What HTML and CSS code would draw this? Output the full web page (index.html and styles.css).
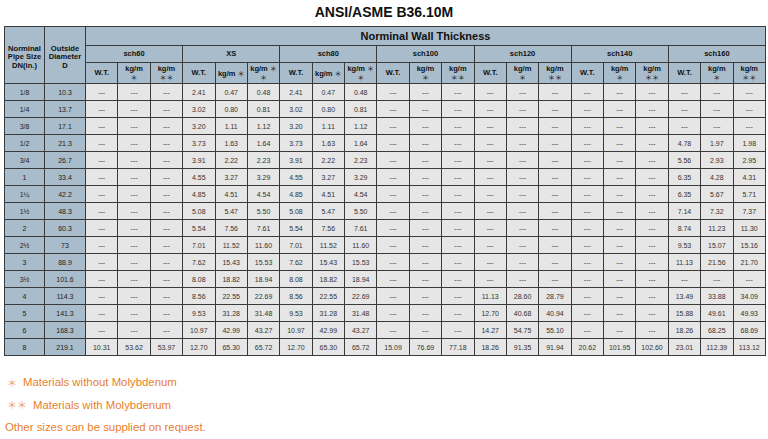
FILE: index.html
```html
<!DOCTYPE html>
<html>
<head>
<meta charset="utf-8">
<link rel="stylesheet" href="styles.css">
</head>
<body>
<h1 class="title">ANSI/ASME B36.10M</h1>
<table class="spec">
<colgroup>
<col class="c-dn"><col class="c-od">
<col><col><col><col><col><col><col><col><col><col><col><col><col><col><col><col><col><col><col><col><col>
</colgroup>
<thead>
<tr class="h1">
<th rowspan="3" class="side">Norminal<br>Pipe Size<br>DN(in.)</th>
<th rowspan="3" class="side">Outside<br>Diameter<br>D</th>
<th colspan="21" class="big">Norminal Wall Thickness</th>
</tr>
<tr class="h2">
<th colspan="3">sch60</th><th colspan="3">XS</th><th colspan="3">sch80</th><th colspan="3">sch100</th><th colspan="3">sch120</th><th colspan="3">sch140</th><th colspan="3">sch160</th>
</tr>
<tr class="h3">
<th>W.T.</th><th>kg/m<br><span class="st">＊</span></th><th>kg/m<br><span class="st">＊＊</span></th>
<th>W.T.</th><th>kg/m <span class="st">＊</span></th><th>kg/m <span class="st">＊</span><br><span class="st">＊</span></th>
<th>W.T.</th><th>kg/m <span class="st">＊</span></th><th>kg/m <span class="st">＊</span><br><span class="st">＊</span></th>
<th>W.T.</th><th>kg/m<br><span class="st">＊</span></th><th>kg/m<br><span class="st">＊＊</span></th>
<th>W.T.</th><th>kg/m<br><span class="st">＊</span></th><th>kg/m<br><span class="st">＊＊</span></th>
<th>W.T.</th><th>kg/m<br><span class="st">＊</span></th><th>kg/m<br><span class="st">＊＊</span></th>
<th>W.T.</th><th>kg/m<br><span class="st">＊</span></th><th>kg/m<br><span class="st">＊＊</span></th>
</tr>
</thead>
<tbody>
<tr><th>1/8</th><th>10.3</th><td>---</td><td>---</td><td>---</td><td>2.41</td><td>0.47</td><td>0.48</td><td>2.41</td><td>0.47</td><td>0.48</td><td>---</td><td>---</td><td>---</td><td>---</td><td>---</td><td>---</td><td>---</td><td>---</td><td>---</td><td>---</td><td>---</td><td>---</td></tr>
<tr><th>1/4</th><th>13.7</th><td>---</td><td>---</td><td>---</td><td>3.02</td><td>0.80</td><td>0.81</td><td>3.02</td><td>0.80</td><td>0.81</td><td>---</td><td>---</td><td>---</td><td>---</td><td>---</td><td>---</td><td>---</td><td>---</td><td>---</td><td>---</td><td>---</td><td>---</td></tr>
<tr><th>3/8</th><th>17.1</th><td>---</td><td>---</td><td>---</td><td>3.20</td><td>1.11</td><td>1.12</td><td>3.20</td><td>1.11</td><td>1.12</td><td>---</td><td>---</td><td>---</td><td>---</td><td>---</td><td>---</td><td>---</td><td>---</td><td>---</td><td>---</td><td>---</td><td>---</td></tr>
<tr><th>1/2</th><th>21.3</th><td>---</td><td>---</td><td>---</td><td>3.73</td><td>1.63</td><td>1.64</td><td>3.73</td><td>1.63</td><td>1.64</td><td>---</td><td>---</td><td>---</td><td>---</td><td>---</td><td>---</td><td>---</td><td>---</td><td>---</td><td>4.78</td><td>1.97</td><td>1.98</td></tr>
<tr><th>3/4</th><th>26.7</th><td>---</td><td>---</td><td>---</td><td>3.91</td><td>2.22</td><td>2.23</td><td>3.91</td><td>2.22</td><td>2.23</td><td>---</td><td>---</td><td>---</td><td>---</td><td>---</td><td>---</td><td>---</td><td>---</td><td>---</td><td>5.56</td><td>2.93</td><td>2.95</td></tr>
<tr><th>1</th><th>33.4</th><td>---</td><td>---</td><td>---</td><td>4.55</td><td>3.27</td><td>3.29</td><td>4.55</td><td>3.27</td><td>3.29</td><td>---</td><td>---</td><td>---</td><td>---</td><td>---</td><td>---</td><td>---</td><td>---</td><td>---</td><td>6.35</td><td>4.28</td><td>4.31</td></tr>
<tr><th>1¼</th><th>42.2</th><td>---</td><td>---</td><td>---</td><td>4.85</td><td>4.51</td><td>4.54</td><td>4.85</td><td>4.51</td><td>4.54</td><td>---</td><td>---</td><td>---</td><td>---</td><td>---</td><td>---</td><td>---</td><td>---</td><td>---</td><td>6.35</td><td>5.67</td><td>5.71</td></tr>
<tr><th>1½</th><th>48.3</th><td>---</td><td>---</td><td>---</td><td>5.08</td><td>5.47</td><td>5.50</td><td>5.08</td><td>5.47</td><td>5.50</td><td>---</td><td>---</td><td>---</td><td>---</td><td>---</td><td>---</td><td>---</td><td>---</td><td>---</td><td>7.14</td><td>7.32</td><td>7.37</td></tr>
<tr><th>2</th><th>60.3</th><td>---</td><td>---</td><td>---</td><td>5.54</td><td>7.56</td><td>7.61</td><td>5.54</td><td>7.56</td><td>7.61</td><td>---</td><td>---</td><td>---</td><td>---</td><td>---</td><td>---</td><td>---</td><td>---</td><td>---</td><td>8.74</td><td>11.23</td><td>11.30</td></tr>
<tr><th>2½</th><th>73</th><td>---</td><td>---</td><td>---</td><td>7.01</td><td>11.52</td><td>11.60</td><td>7.01</td><td>11.52</td><td>11.60</td><td>---</td><td>---</td><td>---</td><td>---</td><td>---</td><td>---</td><td>---</td><td>---</td><td>---</td><td>9.53</td><td>15.07</td><td>15.16</td></tr>
<tr><th>3</th><th>88.9</th><td>---</td><td>---</td><td>---</td><td>7.62</td><td>15.43</td><td>15.53</td><td>7.62</td><td>15.43</td><td>15.53</td><td>---</td><td>---</td><td>---</td><td>---</td><td>---</td><td>---</td><td>---</td><td>---</td><td>---</td><td>11.13</td><td>21.56</td><td>21.70</td></tr>
<tr><th>3½</th><th>101.6</th><td>---</td><td>---</td><td>---</td><td>8.08</td><td>18.82</td><td>18.94</td><td>8.08</td><td>18.82</td><td>18.94</td><td>---</td><td>---</td><td>---</td><td>---</td><td>---</td><td>---</td><td>---</td><td>---</td><td>---</td><td>---</td><td>---</td><td>---</td></tr>
<tr><th>4</th><th>114.3</th><td>---</td><td>---</td><td>---</td><td>8.56</td><td>22.55</td><td>22.69</td><td>8.56</td><td>22.55</td><td>22.69</td><td>---</td><td>---</td><td>---</td><td>11.13</td><td>28.60</td><td>28.79</td><td>---</td><td>---</td><td>---</td><td>13.49</td><td>33.88</td><td>34.09</td></tr>
<tr><th>5</th><th>141.3</th><td>---</td><td>---</td><td>---</td><td>9.53</td><td>31.28</td><td>31.48</td><td>9.53</td><td>31.28</td><td>31.48</td><td>---</td><td>---</td><td>---</td><td>12.70</td><td>40.68</td><td>40.94</td><td>---</td><td>---</td><td>---</td><td>15.88</td><td>49.61</td><td>49.93</td></tr>
<tr><th>6</th><th>168.3</th><td>---</td><td>---</td><td>---</td><td>10.97</td><td>42.99</td><td>43.27</td><td>10.97</td><td>42.99</td><td>43.27</td><td>---</td><td>---</td><td>---</td><td>14.27</td><td>54.75</td><td>55.10</td><td>---</td><td>---</td><td>---</td><td>18.26</td><td>68.25</td><td>68.69</td></tr>
<tr><th>8</th><th>219.1</th><td>10.31</td><td>53.62</td><td>53.97</td><td>12.70</td><td>65.30</td><td>65.72</td><td>12.70</td><td>65.30</td><td>65.72</td><td>15.09</td><td>76.69</td><td>77.18</td><td>18.26</td><td>91.35</td><td>91.94</td><td>20.62</td><td>101.95</td><td>102.60</td><td>23.01</td><td>112.39</td><td>113.12</td></tr>
</tbody>
</table>
<div class="notes">
<p class="note"><span class="nst">＊</span><span>Materials without Molybdenum</span></p>
<p class="note"><span class="nst">＊＊</span><span>Materials with Molybdenum</span></p>
<p class="note plain">Other sizes can be supplied on request.</p>
</div>
</body>
</html>
```
FILE: styles.css
```css
html, body {
  margin: 0;
  padding: 0;
  background: #ffffff;
  font-family: "Liberation Sans", Arial, "Noto Sans CJK SC", sans-serif;
}
.title {
  margin: 0;
  height: 26px;
  line-height: 24px;
  text-align: center;
  font-size: 14px;
  font-weight: bold;
  color: #111;
}
.spec {
  margin-left: 4px;
  width: 762px;
  table-layout: fixed;
  border-collapse: collapse;
  border: 1px solid #2b2b2b;
}
.c-dn { width: 40px; }
.c-od { width: 41px; }
.spec th, .spec td {
  border: 1px solid #3a3a3a;
  padding: 0;
  text-align: center;
  vertical-align: middle;
  overflow: hidden;
}
.spec thead th {
  background: #a9bccb;
  color: #111;
  font-weight: bold;
  font-size: 7.5px;
  line-height: 8px;
}
.spec thead th.side {
  vertical-align: top;
  padding-top: 18px;
  font-size: 7.6px;
  line-height: 8.3px;
}
.spec .h1 th.big {
  height: 18px;
  font-size: 11px;
  line-height: 12px;
}
.spec .h2 th { height: 16px; }
.spec .h3 th { height: 20px; }
.st {
  font-family: "Noto Sans CJK SC", sans-serif;
  font-weight: normal;
  font-size: 7px;
}
.spec tbody th {
  background: #a9bccb;
  font-weight: normal;
  color: #222;
  font-size: 7px;
  height: 16px;
}
.spec tbody td {
  background: #e6e6e6;
  color: #333;
  font-size: 7px;
  height: 16px;
}
.notes {
  padding: 15px 0 0 6px;
}
.note {
  margin: 0;
  height: 22.5px;
  display: flex;
  align-items: center;
  gap: 6px;
  color: #e8802c;
  font-size: 11.4px;
}
.nst {
  font-family: "Noto Sans CJK SC", sans-serif;
  color: #f0a060;
  font-size: 10px;
  padding-left: 1px;
}
.plain { margin-left: -1px; }
```
